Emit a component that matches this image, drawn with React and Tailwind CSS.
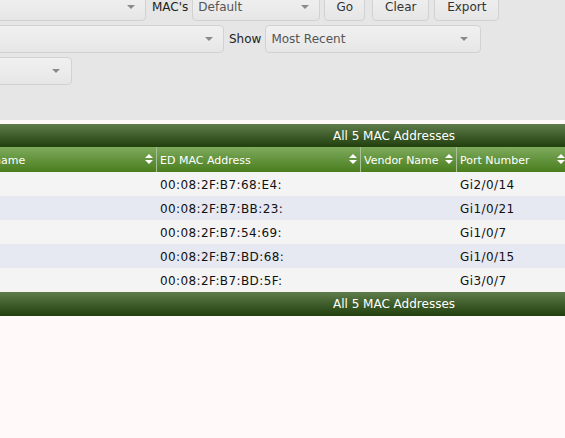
import React from 'react'

const rows = [
  { mac: '00:08:2F:B7:68:E4:', port: 'Gi2/0/14' },
  { mac: '00:08:2F:B7:BB:23:', port: 'Gi1/0/21' },
  { mac: '00:08:2F:B7:54:69:', port: 'Gi1/0/7' },
  { mac: '00:08:2F:B7:BD:68:', port: 'Gi1/0/15' },
  { mac: '00:08:2F:B7:BD:5F:', port: 'Gi3/0/7' },
]

function Select({ label, className }) {
  return (
    <div
      className={`flex h-[28px] shrink-0 items-center justify-between rounded-[4px] border border-[#d2d2d2] bg-gradient-to-b from-[#f0f0f0] via-[#ececec] to-[#e6e6e6] pl-[5px] pr-[10px] text-[12px] text-[#555] ${className}`}
    >
      <span>{label}</span>
      <span className="h-0 w-0 border-x-[4px] border-t-[4px] border-x-transparent border-t-[#8a8a8a]" />
    </div>
  )
}

function Button({ children, className }) {
  return (
    <div
      className={`flex h-[28px] shrink-0 items-center justify-center rounded-[4px] border border-[#d2d2d2] bg-gradient-to-b from-[#f0f0f0] to-[#e6e6e6] text-[12px] text-[#333] ${className}`}
    >
      {children}
    </div>
  )
}

function SortIcon() {
  return (
    <svg width="8" height="10" viewBox="0 0 8 10" className="absolute right-[3px] top-[7px]">
      <path d="M4 0 L8 4 L0 4 Z" fill="#fff" />
      <path d="M0 6 L8 6 L4 10 Z" fill="#fff" />
    </svg>
  )
}

function HeaderCell({ children, width }) {
  return (
    <div
      className={`relative h-full shrink-0 border-r border-[#a9bf98] pl-[3px] pt-[2px] leading-[23px] text-white ${width}`}
    >
      {children}
      <SortIcon />
    </div>
  )
}

export default function App() {
  return (
    <div className="h-[438px] w-[565px] overflow-hidden bg-[#fffaf9] font-['DejaVu_Sans',sans-serif]">
      <div className="h-[120px] overflow-hidden bg-[#e6e6e6]">
        <div className="mt-[-7px] flex flex-col gap-[4px]">
          <div className="flex items-center">
            <Select label="" className="ml-[-54px] w-[200px]" />
            <span className="ml-[6px] mr-[4px] text-[12px] text-[#222]">MAC's</span>
            <Select label="Default" className="w-[128px]" />
            <Button className="ml-[4px] w-[41px]">Go</Button>
            <Button className="ml-[7px] w-[57px]">Clear</Button>
            <Button className="ml-[5px] w-[65px]">Export</Button>
          </div>
          <div className="flex items-center">
            <Select label="" className="ml-[-30px] w-[254px] pr-[8px]" />
            <span className="ml-[5px] mr-[4px] text-[12px] text-[#222]">Show</span>
            <Select label="Most Recent" className="w-[216px] pr-[12px]" />
          </div>
          <div className="flex items-center">
            <Select label="" className="ml-[-40px] w-[112px] pr-[11px]" />
          </div>
        </div>
      </div>
      <div className="mt-[4px] ml-[-34px] w-[856px] text-[11px]">
        <div className="h-[23px] bg-gradient-to-b from-[#5e7d4a] to-[#21400c] pt-[2px] text-center text-[12px] leading-[21px] text-white">
          All 5 MAC Addresses
        </div>
        <div className="flex h-[25px] bg-gradient-to-b from-[#7eab5c] to-[#4a7d1b]">
          <HeaderCell width="w-[191px]">Hostname</HeaderCell>
          <HeaderCell width="w-[204px]">ED MAC Address</HeaderCell>
          <HeaderCell width="w-[96px]">Vendor Name</HeaderCell>
          <HeaderCell width="w-[112px]">Port Number</HeaderCell>
          <HeaderCell width="w-[140px]">Switch</HeaderCell>
        </div>
        {rows.map((row, i) => (
          <div
            key={row.mac}
            className={`flex h-[24px] items-center pt-[2px] text-[12px] tracking-[0.4px] text-[#111] ${i % 2 === 0 ? 'bg-[#f4f4f4]' : 'bg-[#e7e9f2]'}`}
          >
            <div className="w-[191px] shrink-0" />
            <div className="w-[204px] shrink-0 pl-[3px]">{row.mac}</div>
            <div className="w-[96px] shrink-0" />
            <div className="w-[112px] shrink-0 pl-[3px]">{row.port}</div>
          </div>
        ))}
        <div className="h-[24px] bg-gradient-to-b from-[#5e7d4a] to-[#21400c] pt-[1px] text-center text-[12px] leading-[23px] text-white">
          All 5 MAC Addresses
        </div>
      </div>
    </div>
  )
}
